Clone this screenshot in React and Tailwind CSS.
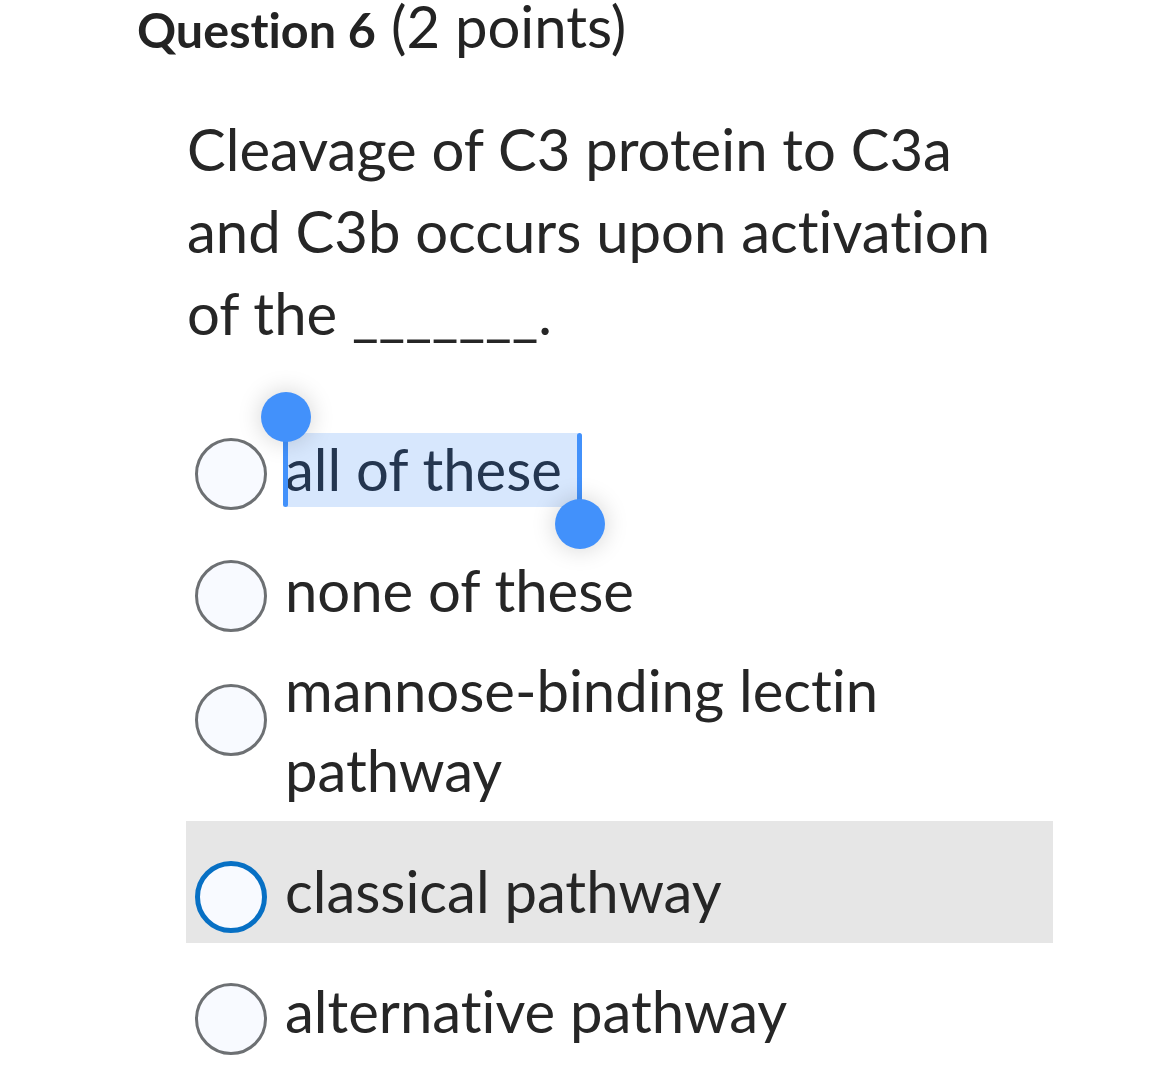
import React from "react";

const options = [
  { id: 1, label: "all of these", selectedText: true, mt: "mt-[75px]", radioMt: "mt-[9px]" },
  { id: 2, label: "none of these", mt: "mt-[40px]", radioMt: "mt-[10px]" },
  { id: 3, label: ["mannose-binding lectin", "pathway"], mt: "mt-[18px]", radioMt: "mt-[34px]" },
  { id: 4, label: "classical pathway", hover: true, focused: true, radioMt: "mt-[10px]" },
  { id: 5, label: "alternative pathway", mt: "mt-[28px]", radioMt: "mt-[12px]" },
];

const Radio = ({ focused, className }) => (
  <div
    className={`w-[72px] h-[72px] shrink-0 rounded-full bg-[#f8faff] ${
      focused ? "border-[5px] border-[#0770c4]" : "border-[3px] border-[#6d7073]"
    } ${className}`}
  />
);

// text selection with its two drag handles, lies over the first answer
const Selection = () => (
  <span className="relative inline-block">
    <span className="absolute left-[1px] top-[4px] w-[292px] h-[74px] bg-[#d7e7fd]" />
    <span className="relative text-[#243650]">all of these</span>
    <span className="absolute left-[-2px] top-[4px] w-[5px] h-[74px] rounded-full bg-[#4291fb]" />
    <span className="absolute left-[-24px] top-[-37px] w-[50px] h-[50px] rounded-full bg-[#4291fb] shadow-[0_0_24px_rgba(0,0,0,0.18)]" />
    <span className="absolute left-[292px] top-[4px] w-[5px] h-[74px] rounded-full bg-[#4291fb]" />
    <span className="absolute left-[270px] top-[70px] w-[50px] h-[50px] rounded-full bg-[#4291fb] shadow-[0_0_24px_rgba(0,0,0,0.18)]" />
  </span>
);

const Option = ({ opt }) => {
  const row = (
    <div className="flex items-start gap-[18px] pl-[9px]">
      <Radio focused={opt.focused} className={opt.radioMt} />
      <div className="text-[58px] leading-[80px] text-[#262626]">
        {opt.selectedText ? (
          <Selection />
        ) : Array.isArray(opt.label) ? (
          opt.label.map((l) => <div key={l}>{l}</div>)
        ) : (
          opt.label
        )}
      </div>
    </div>
  );
  if (opt.hover) {
    return <div className="mt-[11px] bg-[#e6e6e6] pt-[30px] pb-[10px]">{row}</div>;
  }
  return <div className={opt.mt}>{row}</div>;
};

export default function App() {
  return (
    <div
      className="min-h-screen bg-white text-[#262626] [font-variant-ligatures:none]"
      style={{ fontFamily: "Lato, 'Open Sans', sans-serif" }}
    >
      <h1 className="flex items-baseline gap-[15px] pl-[137px] text-[#232323]">
        <span className="text-[48.5px] leading-[52px] font-bold">Question 6</span>
        <span className="text-[58px] leading-[52px] font-normal">(2 points)</span>
      </h1>
      <div className="ml-[186px] w-[867px]">
        <p className="mt-[53px] pl-[1px] text-[58px] leading-[82px] text-[#262626]">
          Cleavage of C3 protein to C3a
          <br />
          and C3b occurs upon activation
          <br />
          of the _______.
        </p>
        <div className="flex flex-col">
          {options.map((opt) => (
            <Option key={opt.id} opt={opt} />
          ))}
        </div>
      </div>
    </div>
  );
}
